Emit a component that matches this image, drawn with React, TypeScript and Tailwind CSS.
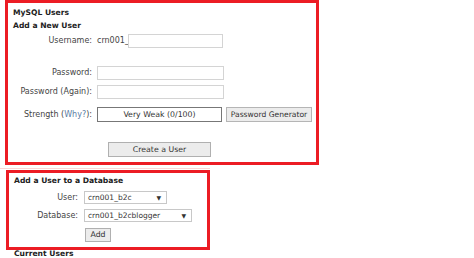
import React from "react";

const font = { fontFamily: '"DejaVu Sans", Verdana, sans-serif' };

const Field: React.FC<{ w?: string }> = ({ w = "w-[127px]" }) => (
  <div className={`${w} h-[14px] border border-[#d4d4d4] bg-white`} />
);

const Select: React.FC<{ value: string; w: string }> = ({ value, w }) => (
  <div
    className={`${w} h-[13px] flex items-center justify-between border border-[#c8c8c8] bg-white pl-[3px] pr-[5px] text-[7.5px] text-[#333] leading-none`}
  >
    <span>{value}</span>
    <span className="text-[6px]">▼</span>
  </div>
);

export default function App() {
  return (
    <div
      className="w-[474px] h-[258px] bg-white overflow-hidden text-[#444]"
      style={font}
    >
      {/* Add a New User */}
      <div className="ml-[5px] w-[314px] h-[165px] border-[3px] border-[#ec1c24]">
        <div className="pl-[5px] pt-[5px] leading-[10px] text-[7.6px] font-bold text-[#222]">
          MySQL Users
        </div>
        <div className="pl-[5px] mt-[3px] leading-[10px] text-[7.6px] font-bold text-[#222]">
          Add a New User
        </div>

        <div className="mt-[3px] flex items-center h-[14px] text-[8px]">
          <div className="w-[84px] text-right">Username:</div>
          <div className="ml-[5px] w-[31px]">crn001_</div>
          <Field w="w-[95px]" />
        </div>

        <div className="mt-[18px] flex items-center h-[14px] text-[8px]">
          <div className="w-[84px] text-right">Password:</div>
          <div className="ml-[5px]">
            <Field />
          </div>
        </div>

        <div className="mt-[5px] flex items-center h-[14px] text-[8px]">
          <div className="w-[84px] text-right">Password (Again):</div>
          <div className="ml-[5px]">
            <Field />
          </div>
        </div>

        <div className="mt-[8px] flex items-center h-[15px] text-[8px]">
          <div className="w-[84px] text-right">
            Strength (<span className="text-[#5b7ca3]">Why?</span>):
          </div>
          <div className="ml-[5px] w-[125px] h-[15px] border border-[#777] bg-white flex items-center justify-center text-[7.8px] text-[#333]">
            Very Weak (0/100)
          </div>
          <button className="ml-[4px] w-[86px] h-[15px] border border-[#b5b5b5] bg-[#ececec] text-[7.6px] text-[#333] leading-none">
            Password Generator
          </button>
        </div>

        <div className="mt-[20px] flex">
          <button className="ml-[100px] w-[103px] h-[15px] border border-[#b0b0b0] bg-[#ececec] text-[7.8px] text-[#333] leading-none">
            Create a User
          </button>
        </div>
      </div>

      <div className="w-[210px] h-px mt-[3px] bg-[#fbd5d6]" />

      {/* Add a User to a Database */}
      <div className="ml-[6px] mt-px w-[204px] h-[80px] border-[3px] border-[#ec1c24]">
        <div className="pl-[5px] pt-[3px] leading-[10px] text-[7.6px] font-bold text-[#222]">
          Add a User to a Database
        </div>
        <div className="mt-[5px] flex items-center h-[13px] text-[8px]">
          <div className="w-[69px] text-right">User:</div>
          <div className="ml-[6px]">
            <Select value="crn001_b2c" w="w-[83px]" />
          </div>
        </div>
        <div className="mt-[5px] flex items-center h-[13px] text-[8px]">
          <div className="w-[69px] text-right">Database:</div>
          <div className="ml-[6px]">
            <Select value="crn001_b2cblogger" w="w-[108px]" />
          </div>
        </div>
        <div className="mt-[6px] flex">
          <button className="ml-[76px] w-[26px] h-[14px] border border-[#b0b0b0] bg-[#ececec] text-[7.8px] text-[#333] leading-none">
            Add
          </button>
        </div>
      </div>

      <div className="pl-[14px] leading-[8px] text-[7.6px] font-bold text-[#222]">
        Current Users
      </div>
    </div>
  );
}
